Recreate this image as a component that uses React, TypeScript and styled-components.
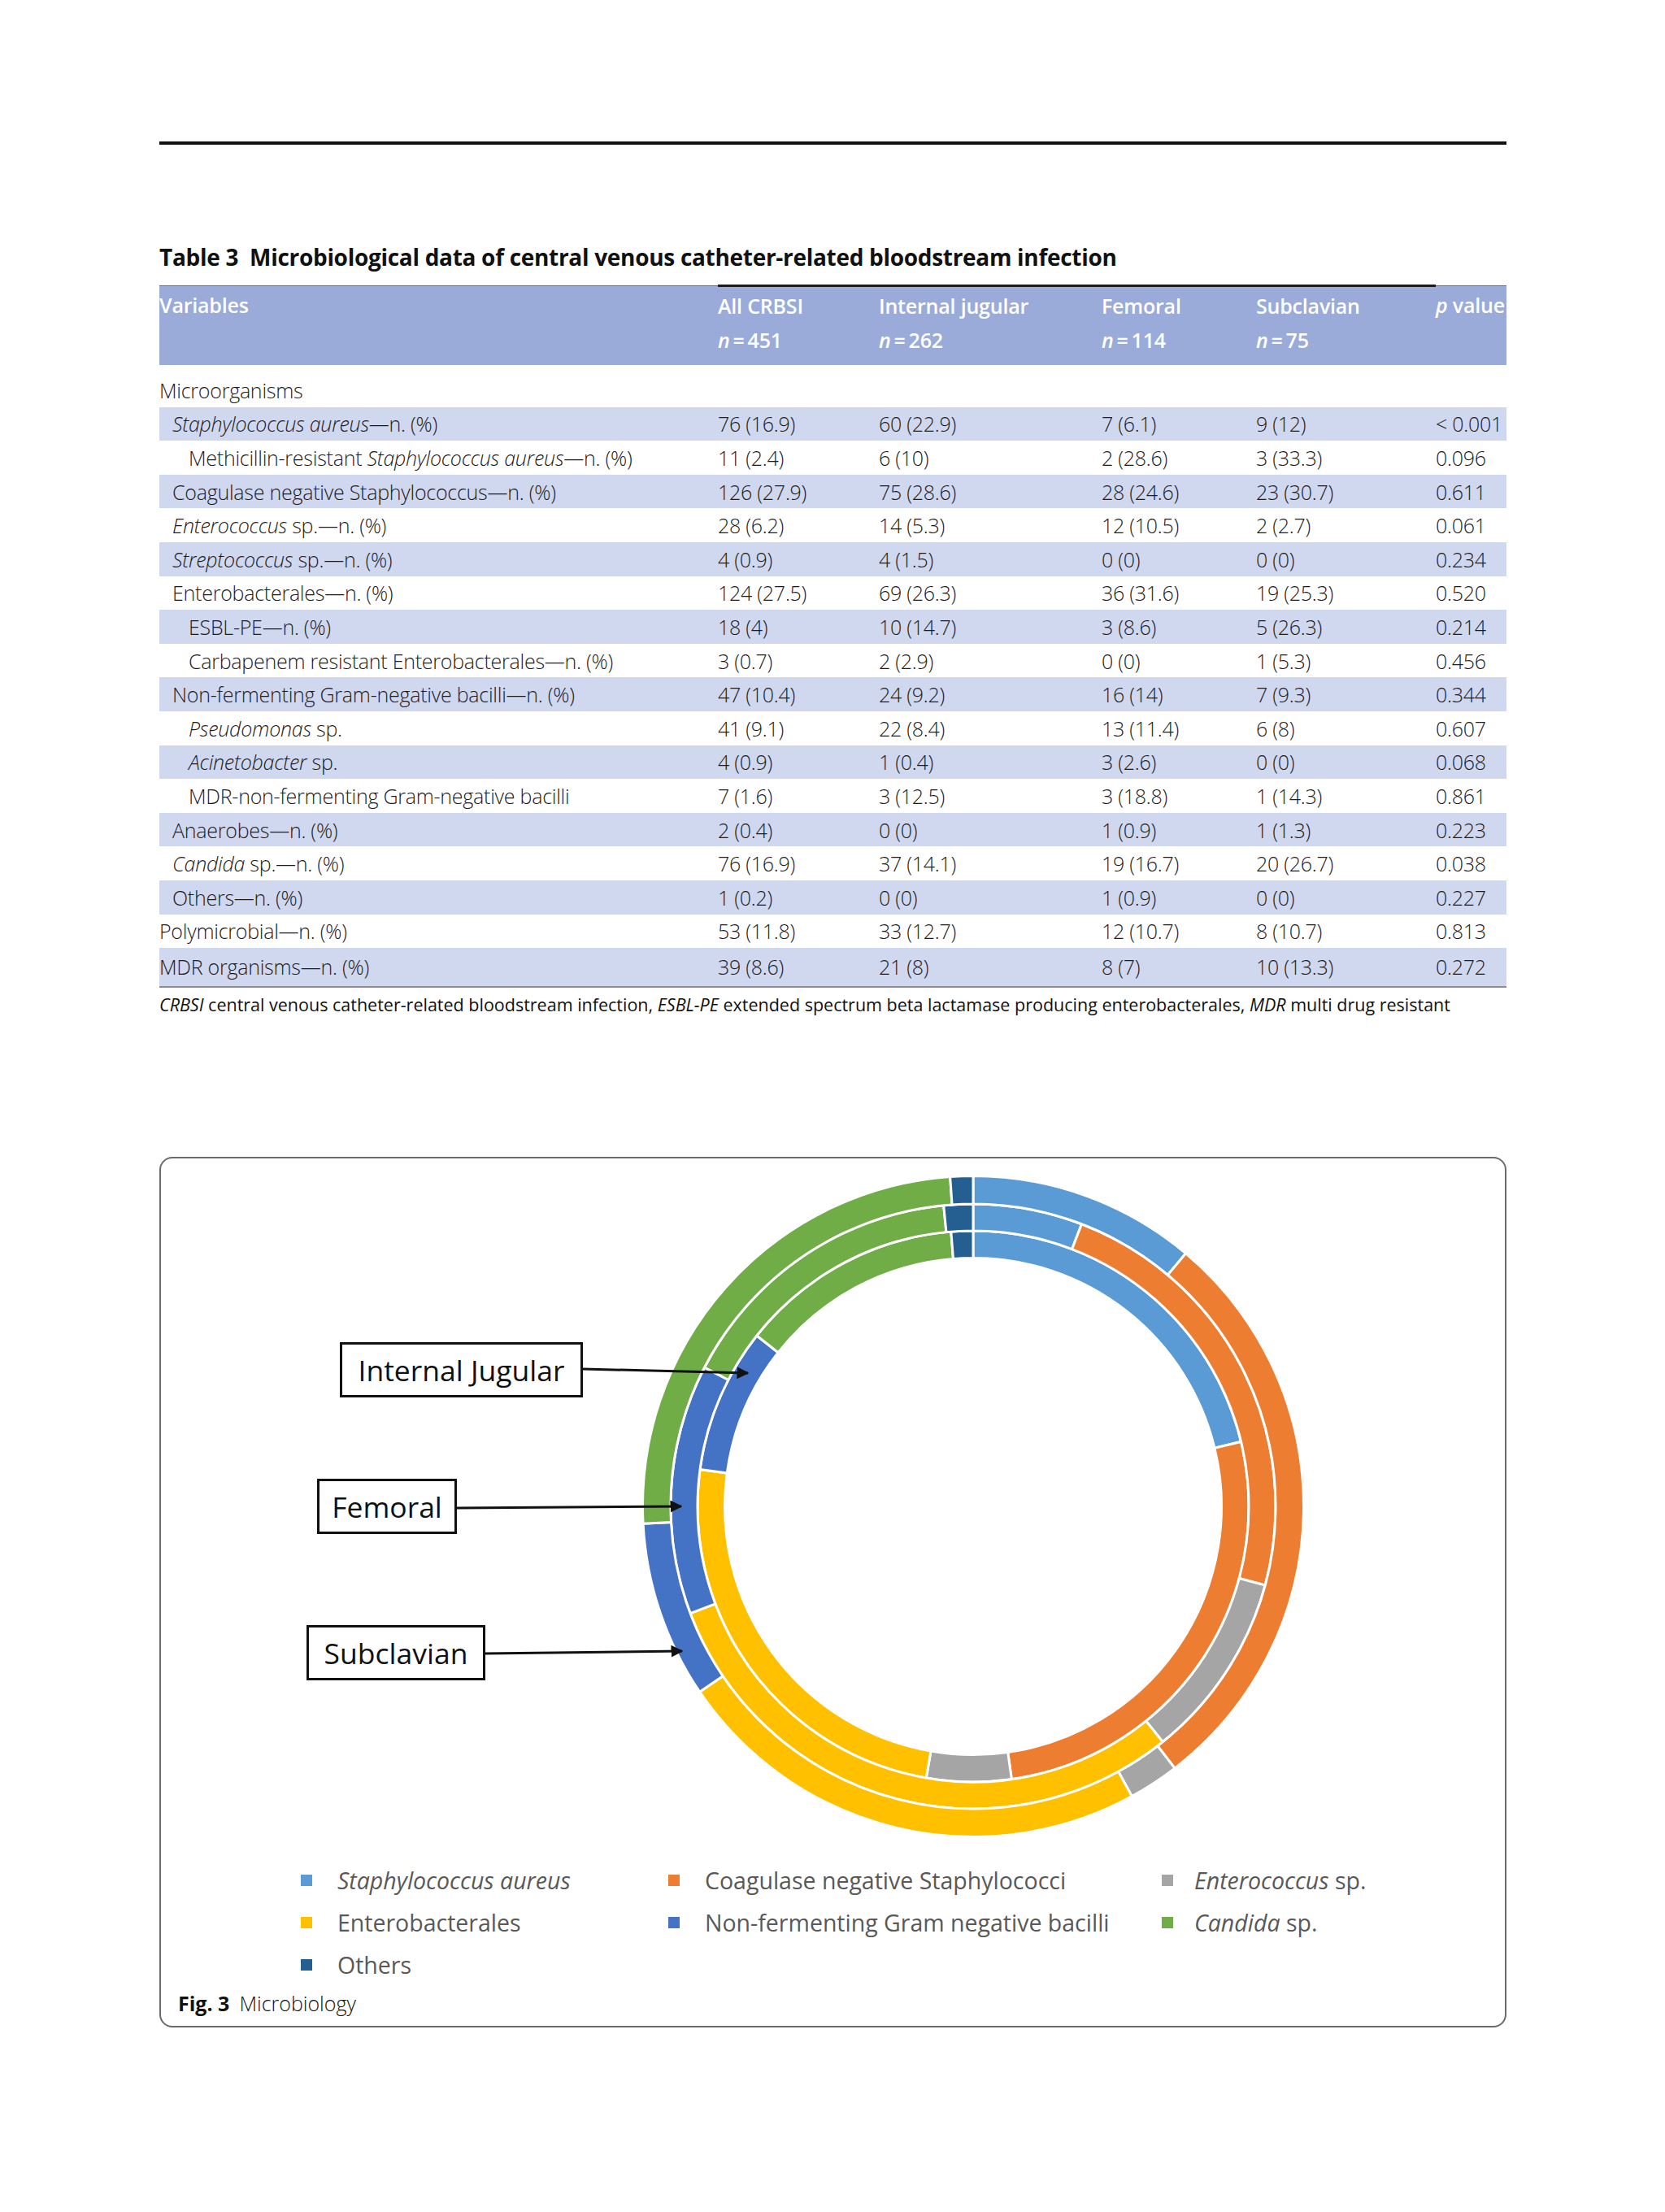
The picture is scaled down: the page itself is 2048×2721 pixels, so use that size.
import React from 'react';
import styled, { createGlobalStyle } from 'styled-components';

const GlobalStyle = createGlobalStyle`
  html, body {
    margin: 0;
    padding: 0;
    background: #fff;
  }
  body {
    width: 2048px;
    min-height: 2721px;
    font-family: "Open Sans", "Liberation Sans", sans-serif;
    color: #231f20;
  }
`;

const Page = styled.div`
  width: 1657px;
  padding: 174px 0 220px 196px;
`;

const TopRule = styled.div`
  height: 4px;
  background: #111;
`;

const TableTitle = styled.h2`
  margin: 118px 0 0;
  font-size: 28px;
  line-height: 40px;
  font-weight: 700;
  letter-spacing: -0.3px;
  color: #111;
  white-space: nowrap;
`;

const Table = styled.table`
  margin-top: 14px;
  width: 100%;
  border-collapse: collapse;
  table-layout: fixed;
  font-size: 25px;
  font-weight: 300;
  letter-spacing: -0.25px;
  color: #1f1b1c;
`;

const HeadCell = styled.th<{ $span?: boolean }>`
  background: #9aabd9;
  color: #fff;
  font-weight: 600;
  font-size: 25px;
  letter-spacing: -0.2px;
  text-align: left;
  vertical-align: top;
  padding: 2px 0 10px;
  height: 96px;
  box-sizing: border-box;
  line-height: 42px;
  border-top: ${(p) => (p.$span ? '3px solid #1b1b1b' : '1px solid #6f6f6f')};
`;

const HeadLine = styled.div`
  height: 42px;
  white-space: nowrap;
`;

const GapRow = styled.tr`
  height: 10px;
`;

const BodyRow = styled.tr<{ $shaded: boolean; $last?: boolean }>`
  background: ${(p) => (p.$shaded ? '#cfd8ef' : 'transparent')};
  height: ${(p) => (p.$last ? '47.6px' : '41.6px')};
  border-bottom: ${(p) => (p.$last ? '2px solid #8c8c8c' : 'none')};
`;

const LabelCell = styled.td<{ $level: number }>`
  padding: 0 0 0 ${(p) => [0, 16, 36][p.$level]}px;
  white-space: nowrap;
  vertical-align: middle;
`;

const ValueCell = styled.td`
  padding: 0;
  white-space: nowrap;
`;

const Footnote = styled.p`
  margin: 6px 0 0;
  font-size: 21.5px;
  line-height: 30px;
  letter-spacing: 0;
  color: #111;
  white-space: nowrap;
`;

const Figure = styled.div`
  margin-top: 172px;
  height: 1071px;
  box-sizing: border-box;
  border: 2px solid #6b6b6b;
  border-radius: 16px;
  display: flex;
  flex-direction: column;
`;

const ChartArea = styled.div`
  position: relative;
  height: 862px;
  flex: none;
`;

const Callout = styled.div<{ $x: number; $y: number; $w: number }>`
  position: absolute;
  left: ${(p) => p.$x}px;
  top: ${(p) => p.$y}px;
  width: ${(p) => p.$w}px;
  height: 68px;
  box-sizing: border-box;
  border: 3px solid #111;
  background: #fff;
  display: flex;
  align-items: center;
  justify-content: center;
  font-size: 35.5px;
  color: #111;
  white-space: nowrap;
`;

const Legend = styled.div`
  display: grid;
  grid-template-columns: 452px 607px 1fr;
  grid-auto-rows: 52px;
  padding-left: 172px;
`;

const LegendItem = styled.div<{ $gap: number }>`
  display: flex;
  align-items: center;
  gap: ${(p) => p.$gap}px;
  font-size: 28.5px;
  color: #595959;
  white-space: nowrap;
`;

const Swatch = styled.span<{ $color: string }>`
  width: 14px;
  height: 14px;
  flex: none;
  background: ${(p) => p.$color};
`;

const Caption = styled.div`
  margin: 4px 0 0 21px;
  font-size: 25px;
  line-height: 34px;
  color: #111;
  font-weight: 300;
  b {
    font-weight: 700;
    margin-right: 12px;
  }
`;

type Row = {
  label: React.ReactNode;
  level: 0 | 1 | 2;
  vals?: string[];
};

const rows: Row[] = [
  { label: 'Microorganisms', level: 0 },
  { label: <><i>Staphylococcus aureus</i>—n. (%)</>, level: 1, vals: ['76 (16.9)', '60 (22.9)', '7 (6.1)', '9 (12)', '< 0.001'] },
  { label: <>Methicillin-resistant <i>Staphylococcus aureus</i>—n. (%)</>, level: 2, vals: ['11 (2.4)', '6 (10)', '2 (28.6)', '3 (33.3)', '0.096'] },
  { label: 'Coagulase negative Staphylococcus—n. (%)', level: 1, vals: ['126 (27.9)', '75 (28.6)', '28 (24.6)', '23 (30.7)', '0.611'] },
  { label: <><i>Enterococcus</i> sp.—n. (%)</>, level: 1, vals: ['28 (6.2)', '14 (5.3)', '12 (10.5)', '2 (2.7)', '0.061'] },
  { label: <><i>Streptococcus</i> sp.—n. (%)</>, level: 1, vals: ['4 (0.9)', '4 (1.5)', '0 (0)', '0 (0)', '0.234'] },
  { label: 'Enterobacterales—n. (%)', level: 1, vals: ['124 (27.5)', '69 (26.3)', '36 (31.6)', '19 (25.3)', '0.520'] },
  { label: 'ESBL-PE—n. (%)', level: 2, vals: ['18 (4)', '10 (14.7)', '3 (8.6)', '5 (26.3)', '0.214'] },
  { label: 'Carbapenem resistant Enterobacterales—n. (%)', level: 2, vals: ['3 (0.7)', '2 (2.9)', '0 (0)', '1 (5.3)', '0.456'] },
  { label: 'Non-fermenting Gram-negative bacilli—n. (%)', level: 1, vals: ['47 (10.4)', '24 (9.2)', '16 (14)', '7 (9.3)', '0.344'] },
  { label: <><i>Pseudomonas</i> sp.</>, level: 2, vals: ['41 (9.1)', '22 (8.4)', '13 (11.4)', '6 (8)', '0.607'] },
  { label: <><i>Acinetobacter</i> sp.</>, level: 2, vals: ['4 (0.9)', '1 (0.4)', '3 (2.6)', '0 (0)', '0.068'] },
  { label: 'MDR-non-fermenting Gram-negative bacilli', level: 2, vals: ['7 (1.6)', '3 (12.5)', '3 (18.8)', '1 (14.3)', '0.861'] },
  { label: 'Anaerobes—n. (%)', level: 1, vals: ['2 (0.4)', '0 (0)', '1 (0.9)', '1 (1.3)', '0.223'] },
  { label: <><i>Candida</i> sp.—n. (%)</>, level: 1, vals: ['76 (16.9)', '37 (14.1)', '19 (16.7)', '20 (26.7)', '0.038'] },
  { label: 'Others—n. (%)', level: 1, vals: ['1 (0.2)', '0 (0)', '1 (0.9)', '0 (0)', '0.227'] },
  { label: 'Polymicrobial—n. (%)', level: 0, vals: ['53 (11.8)', '33 (12.7)', '12 (10.7)', '8 (10.7)', '0.813'] },
  { label: 'MDR organisms—n. (%)', level: 0, vals: ['39 (8.6)', '21 (8)', '8 (7)', '10 (13.3)', '0.272'] },
];

const COLORS = ['#5b9bd5', '#ed7d31', '#a5a5a5', '#ffc000', '#4472c4', '#70ad47', '#255e91'];

// counts per site: staph, CoNS, enterococcus, enterobacterales, NF-GNB, candida; plus the drawn width of "others"
const rings = [
  { r0: 305.5, r1: 339, counts: [60, 75, 14, 69, 24, 37], others: 4.6 },
  { r0: 339, r1: 372, counts: [7, 28, 12, 36, 16, 19], others: 5.6 },
  { r0: 372, r1: 406.5, counts: [9, 23, 2, 19, 7, 20], others: 4 },
];

const CX = 999;
const CY = 428;

const polar = (r: number, deg: number) => {
  const a = ((deg - 90) * Math.PI) / 180;
  return [CX + r * Math.cos(a), CY + r * Math.sin(a)];
};

const sector = (r0: number, r1: number, a0: number, a1: number) => {
  const large = a1 - a0 > 180 ? 1 : 0;
  const [x1, y1] = polar(r1, a0);
  const [x2, y2] = polar(r1, a1);
  const [x3, y3] = polar(r0, a1);
  const [x4, y4] = polar(r0, a0);
  return `M${x1} ${y1} A${r1} ${r1} 0 ${large} 1 ${x2} ${y2} L${x3} ${y3} A${r0} ${r0} 0 ${large} 0 ${x4} ${y4} Z`;
};

const Donut = () => (
  <svg width="1655" height="862" viewBox="0 0 1655 862" style={{ display: 'block' }}>
    <defs>
      <marker id="head" viewBox="0 0 10 10" refX="9" refY="5" markerWidth="5" markerHeight="5" orient="auto">
        <path d="M0 0 L10 5 L0 10 Z" fill="#111" />
      </marker>
    </defs>
    {rings.map((ring, ri) => {
      const total = ring.counts.reduce((s, v) => s + v, 0);
      const scale = (360 - ring.others) / total;
      let a = 0;
      const segs = [...ring.counts.map((v) => v * scale), ring.others];
      return segs.map((deg, i) => {
        const a0 = a;
        a += deg;
        return (
          <path
            key={`${ri}-${i}`}
            d={sector(ring.r0, ring.r1, a0, a)}
            fill={COLORS[i]}
            stroke="#fff"
            strokeWidth={3}
          />
        );
      });
    })}
    <line x1="519" y1="259" x2="722" y2="264" stroke="#111" strokeWidth="3" markerEnd="url(#head)" />
    <line x1="364" y1="430" x2="640" y2="428" stroke="#111" strokeWidth="3" markerEnd="url(#head)" />
    <line x1="399" y1="609" x2="641" y2="606" stroke="#111" strokeWidth="3" markerEnd="url(#head)" />
  </svg>
);

const legend: { color: string; label: React.ReactNode }[] = [
  { color: COLORS[0], label: <i>Staphylococcus aureus</i> },
  { color: COLORS[1], label: 'Coagulase negative Staphylococci' },
  { color: COLORS[2], label: <><i>Enterococcus</i> sp.</> },
  { color: COLORS[3], label: 'Enterobacterales' },
  { color: COLORS[4], label: 'Non-fermenting Gram negative bacilli' },
  { color: COLORS[5], label: <><i>Candida</i> sp.</> },
  { color: COLORS[6], label: 'Others' },
];

export default function App() {
  return (
    <>
      <GlobalStyle />
      <Page>
        <TopRule />
        <TableTitle>Table 3&nbsp;&nbsp;Microbiological data of central venous catheter-related bloodstream infection</TableTitle>
        <Table>
          <colgroup>
            <col style={{ width: 687 }} />
            <col style={{ width: 198 }} />
            <col style={{ width: 274 }} />
            <col style={{ width: 190 }} />
            <col style={{ width: 221 }} />
            <col style={{ width: 87 }} />
          </colgroup>
          <thead>
            <tr>
              <HeadCell><HeadLine>Variables</HeadLine></HeadCell>
              <HeadCell $span><HeadLine>All CRBSI</HeadLine><HeadLine><i>n</i>&#8201;=&#8201;451</HeadLine></HeadCell>
              <HeadCell $span><HeadLine>Internal jugular</HeadLine><HeadLine><i>n</i>&#8201;=&#8201;262</HeadLine></HeadCell>
              <HeadCell $span><HeadLine>Femoral</HeadLine><HeadLine><i>n</i>&#8201;=&#8201;114</HeadLine></HeadCell>
              <HeadCell $span><HeadLine>Subclavian</HeadLine><HeadLine><i>n</i>&#8201;=&#8201;75</HeadLine></HeadCell>
              <HeadCell><HeadLine><i>p</i> value</HeadLine></HeadCell>
            </tr>
          </thead>
          <tbody>
            <GapRow />
            {rows.map((row, i) => (
              <BodyRow key={i} $shaded={i % 2 === 1} $last={i === rows.length - 1}>
                <LabelCell $level={row.level}>{row.label}</LabelCell>
                {(row.vals ?? ['', '', '', '', '']).map((v, j) => (
                  <ValueCell key={j}>{v}</ValueCell>
                ))}
              </BodyRow>
            ))}
          </tbody>
        </Table>
        <Footnote>
          <i>CRBSI</i> central venous catheter-related bloodstream infection, <i>ESBL-PE</i> extended spectrum beta lactamase producing enterobacterales, <i>MDR</i> multi drug resistant
        </Footnote>
        <Figure>
          <ChartArea>
            <Donut />
            <Callout $x={220} $y={226} $w={299}>Internal Jugular</Callout>
            <Callout $x={192} $y={394} $w={172}>Femoral</Callout>
            <Callout $x={179} $y={574} $w={220}>Subclavian</Callout>
          </ChartArea>
          <Legend>
            {legend.map((l, i) => (
              <LegendItem key={i} $gap={i % 3 === 2 ? 26 : 31}>
                <Swatch $color={l.color} />
                <span>{l.label}</span>
              </LegendItem>
            ))}
          </Legend>
          <Caption>
            <b>Fig. 3</b>Microbiology
          </Caption>
        </Figure>
      </Page>
    </>
  );
}
